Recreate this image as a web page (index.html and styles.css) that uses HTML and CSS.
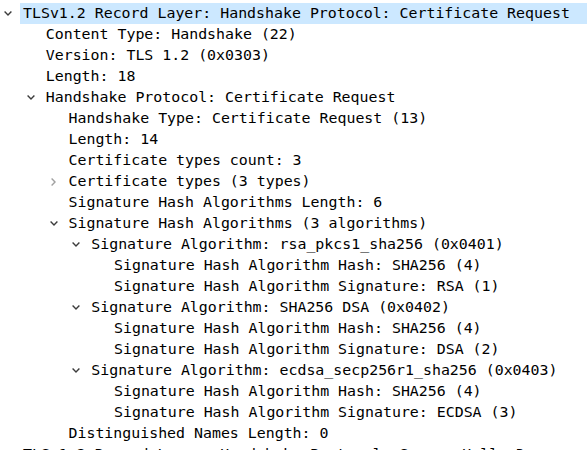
FILE: index.html
```html
<!DOCTYPE html>
<html lang="en">
<head>
    <meta charset="UTF-8">
    <title>Packet details</title>
    <link rel="stylesheet" href="styles.css">
</head>
<body>
    <!-- packet details tree -->
    <div class="tree">
        <div class="row lv0 open selected"><span class="tog"><svg width="8" height="5" viewBox="0 0 8 5"><polyline points="0.6,0.6 4,4 7.4,0.6"/></svg></span><span class="label">TLSv1.2 Record Layer: Handshake Protocol: Certificate Request</span></div>
        <div class="row lv1"><span class="tog"></span><span class="label">Content Type: Handshake (22)</span></div>
        <div class="row lv1"><span class="tog"></span><span class="label">Version: TLS 1.2 (0x0303)</span></div>
        <div class="row lv1"><span class="tog"></span><span class="label">Length: 18</span></div>
        <div class="row lv1 open"><span class="tog"><svg width="8" height="5" viewBox="0 0 8 5"><polyline points="0.6,0.6 4,4 7.4,0.6"/></svg></span><span class="label">Handshake Protocol: Certificate Request</span></div>
        <div class="row lv2"><span class="tog"></span><span class="label">Handshake Type: Certificate Request (13)</span></div>
        <div class="row lv2"><span class="tog"></span><span class="label">Length: 14</span></div>
        <div class="row lv2"><span class="tog"></span><span class="label">Certificate types count: 3</span></div>
        <div class="row lv2 closed"><span class="tog"><svg width="5" height="8" viewBox="0 0 5 8"><polyline points="0.6,0.6 4,4 0.6,7.4"/></svg></span><span class="label">Certificate types (3 types)</span></div>
        <div class="row lv2"><span class="tog"></span><span class="label">Signature Hash Algorithms Length: 6</span></div>
        <div class="row lv2 open"><span class="tog"><svg width="8" height="5" viewBox="0 0 8 5"><polyline points="0.6,0.6 4,4 7.4,0.6"/></svg></span><span class="label">Signature Hash Algorithms (3 algorithms)</span></div>
        <div class="row lv3 open"><span class="tog"><svg width="8" height="5" viewBox="0 0 8 5"><polyline points="0.6,0.6 4,4 7.4,0.6"/></svg></span><span class="label">Signature Algorithm: rsa_pkcs1_sha256 (0x0401)</span></div>
        <div class="row lv4"><span class="tog"></span><span class="label">Signature Hash Algorithm Hash: SHA256 (4)</span></div>
        <div class="row lv4"><span class="tog"></span><span class="label">Signature Hash Algorithm Signature: RSA (1)</span></div>
        <div class="row lv3 open"><span class="tog"><svg width="8" height="5" viewBox="0 0 8 5"><polyline points="0.6,0.6 4,4 7.4,0.6"/></svg></span><span class="label">Signature Algorithm: SHA256 DSA (0x0402)</span></div>
        <div class="row lv4"><span class="tog"></span><span class="label">Signature Hash Algorithm Hash: SHA256 (4)</span></div>
        <div class="row lv4"><span class="tog"></span><span class="label">Signature Hash Algorithm Signature: DSA (2)</span></div>
        <div class="row lv3 open"><span class="tog"><svg width="8" height="5" viewBox="0 0 8 5"><polyline points="0.6,0.6 4,4 7.4,0.6"/></svg></span><span class="label">Signature Algorithm: ecdsa_secp256r1_sha256 (0x0403)</span></div>
        <div class="row lv4"><span class="tog"></span><span class="label">Signature Hash Algorithm Hash: SHA256 (4)</span></div>
        <div class="row lv4"><span class="tog"></span><span class="label">Signature Hash Algorithm Signature: ECDSA (3)</span></div>
        <div class="row lv2"><span class="tog"></span><span class="label">Distinguished Names Length: 0</span></div>
        <div class="row lv0 closed"><span class="tog"><svg width="5" height="8" viewBox="0 0 5 8"><polyline points="0.6,0.6 4,4 0.6,7.4"/></svg></span><span class="label">TLSv1.2 Record Layer: Handshake Protocol: Server Hello Done</span></div>
    </div>
</body>
</html>
```

FILE: styles.css
```css
/* whole page */
html, body {
    margin: 0;
    background: #fff;
    overflow: hidden;
}

body {
    padding-top: 3px;
    font-family: "DejaVu Sans Mono", "Liberation Mono", monospace;
    font-size: 14.9px;
    color: #000;
}

/* one line of the tree */
.row {
    display: flex;
    align-items: center;
    height: 21px;
    white-space: nowrap;
    padding-left: 4px;
}

.lv1 { padding-left: 26.75px; }
.lv2 { padding-left: 49.5px; }
.lv3 { padding-left: 72.25px; }
.lv4 { padding-left: 95px; }

.tog {
    width: 16px;
    flex: none;
    display: flex;
    align-items: center;
}

.tog svg {
    display: block;
    fill: none;
    stroke-width: 1.4;
}

.open .tog svg {
    stroke: #3c3c3c;
}

.closed .tog svg {
    stroke: #a0a0a0;
    margin-left: 1px;
}

.label {
    flex: 1;
    height: 21px;
    line-height: 21px;
    padding-left: 3px;
}

.selected .label {
    background: #cce8ff;
}
```
